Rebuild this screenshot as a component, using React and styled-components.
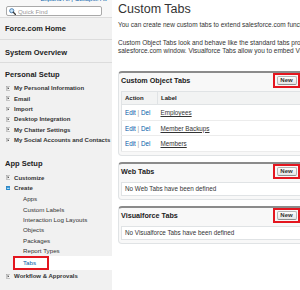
import React from "react";
import styled, { createGlobalStyle } from "styled-components";

const GlobalStyle = createGlobalStyle`
  html, body { margin: 0; padding: 0; background: #fff; }
  body { font-family: "Liberation Sans", Arial, sans-serif; overflow: hidden; }
`;

const Page = styled.div`
  display: flex;
  width: 300px;
  height: 290px;
  overflow: hidden;
  background: #fff;
`;

const Sidebar = styled.aside`
  flex: 0 0 112px;
  background: #f1f1f1;
  color: #333;
  overflow: hidden;
`;

const SideTop = styled.div`
  height: 23px;
  box-sizing: border-box;
  padding: 0 10px 0 6px;
  background: #f7f7f7;
  border-bottom: 1px solid #dcdcdc;
`;

const ExpandLinks = styled.div`
  margin: -5px -5px 0 0;
  height: 7px;
  line-height: 7px;
  text-align: right;
  font-size: 6.2px;
  color: #015ba7;
  white-space: nowrap;
`;

const QuickFind = styled.div`
  display: flex;
  align-items: center;
  gap: 2px;
  height: 10px;
  margin-top: 4px;
  box-sizing: border-box;
  padding-left: 2px;
  background: #fff;
  border: 1px solid #a9a9a9;
  border-radius: 2px;
  font-size: 6.2px;
  color: #999;
`;

const TopLink = styled.div`
  height: ${(p) => p.$h}px;
  line-height: ${(p) => p.$h}px;
  padding: ${(p) => p.$pt || 0}px 0 0 5px;
  box-sizing: border-box;
  font-size: 7.5px;
  font-weight: bold;
  color: #222;
  border-bottom: 1px solid #dcdcdc;
`;

const Section = styled.div`
  padding-top: ${(p) => p.$top}px;
`;

const SectionTitle = styled.div`
  height: 10px;
  line-height: 10px;
  padding-left: 5px;
  margin-bottom: 3.3px;
  font-size: 7.5px;
  font-weight: bold;
  color: #222;
`;

const Node = styled.div`
  display: flex;
  align-items: center;
  gap: 4px;
  height: 10.3px;
  padding-left: 5.5px;
  font-size: 6px;
  font-weight: bold;
  color: #333;
  white-space: nowrap;
`;

const SubList = styled.div`
  margin-top: 1.5px;
`;

const SubItem = styled.div`
  height: 10.3px;
  line-height: 10.3px;
  padding-left: 23px;
  font-size: 6.2px;
  color: #333;
  white-space: nowrap;
`;

const SelectedRow = styled.div`
  margin: 0 0 1.5px 13px;
  background: #fff;
`;

const Highlight = styled.div`
  width: 36px;
  height: 13.5px;
  box-sizing: border-box;
  border: 2px solid #e4161f;
  padding-left: 8px;
  line-height: 9.5px;
  font-size: 6.2px;
  color: #015ba7;
`;

const Main = styled.main`
  flex: 1 1 auto;
  min-width: 0;
  padding: 2px 0 0 6px;
  overflow: hidden;
  color: #333;
`;

const Title = styled.h1`
  margin: 0;
  font-size: 12.5px;
  line-height: 14px;
  font-weight: normal;
  color: #333;
  white-space: nowrap;
`;

const Para = styled.p`
  margin: ${(p) => p.$mt}px 0 0;
  font-size: 6.5px;
  line-height: 8px;
  white-space: nowrap;
  color: #333;
`;

const Panels = styled.div`
  margin-top: 16.3px;
  width: 560px;
`;

const Panel = styled.section`
  box-sizing: border-box;
  background: #f8f8f8;
  border: 1px solid #e0e3e5;
  border-top: 2px solid #8b8b8b;
  border-radius: 4px;
  padding: 0 2px 3px 2px;
  & + & { margin-top: 6px; }
`;

const PanelHeader = styled.div`
  display: flex;
  align-items: center;
  height: 16px;
  margin-bottom: 2px;
`;

const PanelTitle = styled.h2`
  flex: 0 0 152px;
  margin: 0;
  font-size: 7.2px;
  font-weight: bold;
  color: #222;
  white-space: nowrap;
`;

const RedBox = styled.div`
  display: flex;
  padding: 1px 1.5px;
  border: 2px solid #e4161f;
`;

const Button = styled.button`
  width: 20px;
  height: 9px;
  padding: 0;
  font-family: inherit;
  font-size: 6px;
  font-weight: bold;
  line-height: 7px;
  color: #333;
  background: linear-gradient(#fdfdfd, #e6e6e6);
  border: 1px solid #b5b5b5;
  border-bottom-color: #8f8f8f;
  border-radius: 2px;
`;

const Table = styled.table`
  width: 100%;
  border-collapse: collapse;
  background: #fff;
  border: 1px solid #e0e3e5;
`;

const Th = styled.th`
  height: 12.5px;
  padding: 0 3px;
  width: ${(p) => (p.$w ? `${p.$w}px` : "auto")};
  background: #f2f3f3;
  border-bottom: 1px solid #e0e3e5;
  & + & { border-left: 1px solid #e0e3e5; }
  text-align: left;
  font-size: 6px;
  font-weight: bold;
  color: #222;
`;

const Td = styled.td`
  height: 14.5px;
  padding: 0 3px;
  border-bottom: 1px solid #ececec;
  font-size: 6.3px;
  color: #333;
  white-space: nowrap;
`;

const ActionLink = styled.a`
  color: #015ba7;
  text-decoration: none;
`;

const Sep = styled.span`
  color: #999;
`;

const LabelLink = styled.a`
  color: #333;
  text-decoration: underline;
`;

const Empty = styled.div`
  height: 14px;
  box-sizing: border-box;
  padding-left: 3px;
  line-height: 12px;
  background: #fff;
  border: 1px solid #e0e3e5;
  font-size: 6.3px;
  color: #333;
`;

const TreeIcon = ({ open }) =>
  open ? (
    <svg width="4.6" height="4.6" viewBox="0 0 10 10">
      <rect x="0.5" y="0.5" width="9" height="9" fill="#1f8ad2" stroke="#1670b0" />
      <path d="M2.3 5H7.7" stroke="#fff" strokeWidth="1.8" />
    </svg>
  ) : (
    <svg width="4.6" height="4.6" viewBox="0 0 10 10">
      <rect x="0.5" y="0.5" width="9" height="9" fill="#f6f6f6" stroke="#8f8f8f" />
      <path d="M3.6 2.4L7 5L3.6 7.6Z" fill="#333" />
    </svg>
  );

const Magnifier = () => (
  <svg width="7" height="7" viewBox="0 0 14 14">
    <circle cx="5.5" cy="5.5" r="4.2" fill="#c8e4f7" stroke="#2f6aa3" strokeWidth="1.6" />
    <path d="M8.6 8.6L13 13" stroke="#3a3a3a" strokeWidth="2.6" strokeLinecap="round" />
  </svg>
);

const personal = [
  "My Personal Information",
  "Email",
  "Import",
  "Desktop Integration",
  "My Chatter Settings",
  "My Social Accounts and Contacts",
];

const createItems = [
  "Apps",
  "Custom Labels",
  "Interaction Log Layouts",
  "Objects",
  "Packages",
  "Report Types",
];

const customTabs = ["Employees", "Member Backups", "Members"];

const PanelHead = ({ title }) => (
  <PanelHeader>
    <PanelTitle>{title}</PanelTitle>
    <RedBox>
      <Button>New</Button>
    </RedBox>
  </PanelHeader>
);

export default function App() {
  return (
    <>
      <GlobalStyle />
      <Page>
        <Sidebar>
          <SideTop>
            <ExpandLinks>Expand All | Collapse All</ExpandLinks>
            <QuickFind>
              <Magnifier />
              <span>Quick Find</span>
            </QuickFind>
          </SideTop>
          <TopLink $h={22}>Force.com Home</TopLink>
          <TopLink $h={23} $pt={1}>System Overview</TopLink>
          <Section $top={7}>
            <SectionTitle>Personal Setup</SectionTitle>
            {personal.map((p) => (
              <Node key={p}>
                <TreeIcon />
                {p}
              </Node>
            ))}
          </Section>
          <Section $top={14}>
            <SectionTitle>App Setup</SectionTitle>
            <Node>
              <TreeIcon />
              Customize
            </Node>
            <Node>
              <TreeIcon open />
              Create
            </Node>
            <SubList>
              {createItems.map((c) => (
                <SubItem key={c}>{c}</SubItem>
              ))}
              <SelectedRow>
                <Highlight>Tabs</Highlight>
              </SelectedRow>
            </SubList>
            <Node>
              <TreeIcon />
              Workflow &amp; Approvals
            </Node>
          </Section>
        </Sidebar>
        <Main>
          <Title>Custom Tabs</Title>
          <Para $mt={5}>
            You can create new custom tabs to extend salesforce.com functionality or to build new application functionality.
          </Para>
          <Para $mt={9.7}>
            Custom Object Tabs look and behave like the standard tabs provided with salesforce.com. Web Tabs allow you to embed external web applications and content within the
            <br />
            salesforce.com window. Visualforce Tabs allow you to embed Visualforce pages.
          </Para>
          <Panels>
            <Panel>
              <PanelHead title="Custom Object Tabs" />
              <Table>
                <thead>
                  <tr>
                    <Th $w={29}>Action</Th>
                    <Th>Label</Th>
                  </tr>
                </thead>
                <tbody>
                  {customTabs.map((t) => (
                    <tr key={t}>
                      <Td>
                        <ActionLink>Edit</ActionLink> <Sep>|</Sep> <ActionLink>Del</ActionLink>
                      </Td>
                      <Td>
                        <LabelLink>{t}</LabelLink>
                      </Td>
                    </tr>
                  ))}
                </tbody>
              </Table>
            </Panel>
            <Panel>
              <PanelHead title="Web Tabs" />
              <Empty>No Web Tabs have been defined</Empty>
            </Panel>
            <Panel>
              <PanelHead title="Visualforce Tabs" />
              <Empty>No Visualforce Tabs have been defined</Empty>
            </Panel>
          </Panels>
        </Main>
      </Page>
    </>
  );
}
